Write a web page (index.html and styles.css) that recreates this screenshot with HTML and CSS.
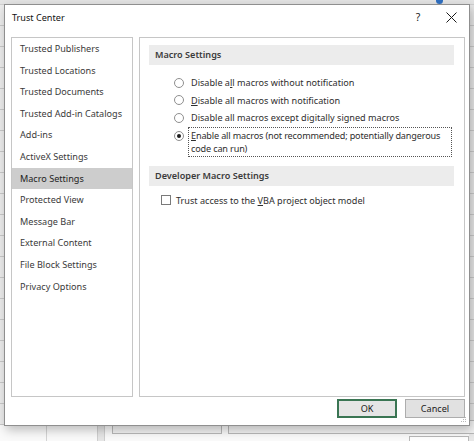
FILE: index.html
```html
<!DOCTYPE html>
<html>
<head>
<meta charset="utf-8">
<link rel="stylesheet" href="styles.css">
</head>
<body>
<div class="app">
  <div class="bg-top"></div>
  <div class="bg-top-blue"></div>
  <div class="bg-left"></div>
  <div class="bg-right"></div>
  <div class="bg-vline a"></div>
  <div class="bg-vbar"></div>
  <div class="bg-box b1"></div>
  <div class="bg-box b2"></div>
  <div class="bg-box b3"></div>

  <div class="dialog">
    <div class="titlebar">
      <span class="title">Trust Center</span>
      <span class="help">?</span>
      <span class="close">
        <svg width="11" height="11" viewBox="0 0 11 11"><path d="M0.5 0.5 L10.5 10.5 M10.5 0.5 L0.5 10.5" stroke="#1a1a1a" stroke-width="1" fill="none"/></svg>
      </span>
    </div>
    <div class="body">
      <ul class="nav">
        <li>Trusted Publishers</li>
        <li>Trusted Locations</li>
        <li>Trusted Documents</li>
        <li>Trusted Add-in Catalogs</li>
        <li>Add-ins</li>
        <li>ActiveX Settings</li>
        <li class="selected">Macro Settings</li>
        <li>Protected View</li>
        <li>Message Bar</li>
        <li>External Content</li>
        <li>File Block Settings</li>
        <li>Privacy Options</li>
      </ul>
      <div class="content">
        <div class="section-head">Macro Settings</div>
        <div class="options">
          <div class="opt"><span class="radio"></span><span class="label">Disable a<u>l</u>l macros without notification</span></div>
          <div class="opt"><span class="radio"></span><span class="label"><u>D</u>isable all macros with notification</span></div>
          <div class="opt"><span class="radio"></span><span class="label">Disable all macros except digitally signed macros</span></div>
          <div class="opt top"><span class="radio checked"></span><span class="label focus"><u>E</u>nable all macros (not recommended; potentially dangerous<br>code can run)</span></div>
        </div>
        <div class="section-head">Developer Macro Settings</div>
        <div class="checks">
          <div class="opt"><span class="checkbox"></span><span class="label">Trust access to the <u>V</u>BA project object model</span></div>
        </div>
      </div>
    </div>
    <div class="footer">
      <button class="btn ok">OK</button>
      <button class="btn">Cancel</button>
      <span class="grip">
        <svg width="6" height="6" viewBox="0 0 6 6"><g fill="#b8b8b8"><rect x="4" y="0" width="1" height="1"/><rect x="2" y="2" width="1" height="1"/><rect x="4" y="2" width="1" height="1"/><rect x="0" y="4" width="1" height="1"/><rect x="2" y="4" width="1" height="1"/><rect x="4" y="4" width="1" height="1"/></g></svg>
      </span>
    </div>
  </div>
</div>
</body>
</html>
```

FILE: styles.css
```css
* { box-sizing: border-box; }
html, body { margin: 0; padding: 0; }
body {
  width: 474px;
  height: 441px;
  overflow: hidden;
  background: #ffffff;
  font-family: "Noto Sans", "Open Sans", sans-serif;
  font-size: 9.1px;
  color: #262626;
}
.app { position: relative; width: 474px; height: 441px; background: #fafafa; }

/* background application (behind the dialog) */
.bg-top { position: absolute; left: 0; top: 0; width: 474px; height: 5px; background: #e4e4e4; border-bottom: 1px solid #d0d0d0; }
.bg-top-blue { position: absolute; left: 436px; top: 0; width: 7px; height: 4px; border-radius: 0 0 4px 4px; background: #2f6fc1; }
.bg-left { position: absolute; left: 0; top: 5px; width: 4px; height: 420px;
  background: repeating-linear-gradient(to bottom, #ececec 0, #ececec 20px, #c9c9c9 20px, #c9c9c9 21px); }
.bg-right { position: absolute; right: 0; top: 5px; width: 5px; height: 436px;
  background: repeating-linear-gradient(to bottom, #e8e8e8 0, #e8e8e8 20px, #c9c9c9 20px, #c9c9c9 21px); }
.bg-vline { position: absolute; top: 424px; width: 1px; height: 17px; background: #d4d4d4; }
.bg-vline.a { left: 46px; }
.bg-vbar { position: absolute; left: 97px; top: 424px; width: 8px; height: 17px; background: #e6e6e6; border-left: 1px solid #cfcfcf; border-right: 1px solid #cfcfcf; }
.bg-box { position: absolute; border: 1px solid #b9b9b9; background: #f3f3f3; }
.bg-box.b1 { left: 112px; top: 420px; width: 110px; height: 14px; }
.bg-box.b2 { left: 228px; top: 420px; width: 250px; height: 14px; }
.bg-box.b3 { left: 409px; top: 436px; width: 60px; height: 10px; background: #fff; }

/* dialog */
.dialog {
  position: absolute;
  left: 4px;
  top: 4px;
  width: 466px;
  height: 422px;
  background: #ffffff;
  border: 1px solid #8f8f8f;
  box-shadow: 2px 4px 10px rgba(0,0,0,0.25);
  display: flex;
  flex-direction: column;
}
.titlebar {
  height: 32px;
  display: flex;
  align-items: center;
  padding: 0 0 0 7px;
  flex: none;
}
.title { font-size: 9.1px; color: #111; flex: 1; margin-top: -8px; }
.help { font-size: 10.5px; color: #222; width: 14px; margin-right: 21px; margin-top: -8px; text-align: center; }
.close { width: 11px; height: 11px; margin-right: 12px; margin-top: -8px; display: flex; }

.body {
  display: flex;
  gap: 6px;
  padding: 0 4px 0 6px;
  height: 360px;
  flex: none;
}
.nav {
  list-style: none;
  margin: 0;
  padding: 0;
  width: 122px;
  border: 1px solid #c6c6c6;
  flex: none;
}
.nav li {
  height: 21.6px;
  line-height: 21.6px;
  padding-left: 8px;
  color: #3a3a3a;
  white-space: nowrap;
}
.nav li.selected { background: #cdcdcd; color: #222; }

.content {
  flex: 1;
  border: 1px solid #c6c6c6;
  padding: 7px 10px 0 9px;
}
.section-head {
  height: 20px;
  line-height: 20px;
  background: #ececec;
  padding-left: 6px;
  font-weight: 600;
  color: #3b3b3b;
  font-size: 9.1px;
}
.options { padding: 9px 0 9px 25px; display: flex; flex-direction: column; gap: 0; }
.opt { display: flex; align-items: center; min-height: 17.5px; }
.opt.top { align-items: flex-start; }
.radio {
  width: 10px; height: 10px; border-radius: 50%;
  border: 1px solid #8f8f8f; background: #fff;
  flex: none; margin-right: 7px;
  display: flex; align-items: center; justify-content: center;
}
.opt.top .radio { margin-top: 4px; }
.radio.checked::after { content: ""; width: 4px; height: 4px; border-radius: 50%; background: #1c1c1c; }
.label { color: #2e2e2e; white-space: nowrap; }
.label.focus {
  border: 1px dotted #555;
  padding: 1px 2px 1px 2px;
  width: 264px;
  line-height: 13px;
  margin-left: -3px;
  letter-spacing: -0.15px;
}
.checks { padding: 6px 0 0 12px; }
.checkbox {
  width: 10px; height: 10px; border: 1px solid #7a7a7a; background: #fff;
  flex: none; margin-right: 5px;
}

.footer {
  flex: 1;
  display: flex;
  align-items: flex-start;
  justify-content: flex-end;
  padding: 2px 4px 0 0;
  gap: 8px;
  position: relative;
}
.btn {
  font-family: inherit;
  font-size: 9.1px;
  width: 60px;
  height: 19px;
  padding: 0;
  background: #e1e1e1;
  border: 1px solid #adadad;
  color: #1a1a1a;
}
.btn.ok { border: 2px solid #3a7553; background: #e5e5e5; }
.grip { position: absolute; right: 2px; bottom: 2px; width: 6px; height: 6px; display: flex; }
```
